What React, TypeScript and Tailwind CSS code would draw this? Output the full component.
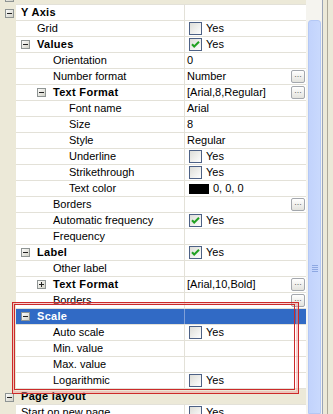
import React from 'react';
import clsx from 'clsx';

type Kind = 'cat' | 'group' | 'prop';

type Val =
  | { t: 'text'; s: string; btn?: boolean }
  | { t: 'check'; on: boolean }
  | { t: 'color'; s: string }
  | { t: 'btn' };

interface Row {
  label: string;
  level: number;
  kind: Kind;
  open?: boolean;
  value?: Val;
  selected?: boolean;
  shaded?: boolean;
}

const rows: Row[] = [
  { label: 'X Axis', level: 0, kind: 'cat', open: false, shaded: true },
  { label: 'Y Axis', level: 0, kind: 'cat', open: true },
  { label: 'Grid', level: 1, kind: 'prop', value: { t: 'check', on: false } },
  { label: 'Values', level: 1, kind: 'group', open: true, value: { t: 'check', on: true } },
  { label: 'Orientation', level: 2, kind: 'prop', value: { t: 'text', s: '0' } },
  { label: 'Number format', level: 2, kind: 'prop', value: { t: 'text', s: 'Number', btn: true } },
  { label: 'Text Format', level: 2, kind: 'group', open: true, value: { t: 'text', s: '[Arial,8,Regular]', btn: true } },
  { label: 'Font name', level: 3, kind: 'prop', value: { t: 'text', s: 'Arial' } },
  { label: 'Size', level: 3, kind: 'prop', value: { t: 'text', s: '8' } },
  { label: 'Style', level: 3, kind: 'prop', value: { t: 'text', s: 'Regular' } },
  { label: 'Underline', level: 3, kind: 'prop', value: { t: 'check', on: false } },
  { label: 'Strikethrough', level: 3, kind: 'prop', value: { t: 'check', on: false } },
  { label: 'Text color', level: 3, kind: 'prop', value: { t: 'color', s: '0, 0, 0' } },
  { label: 'Borders', level: 2, kind: 'prop', value: { t: 'btn' } },
  { label: 'Automatic frequency', level: 2, kind: 'prop', value: { t: 'check', on: true } },
  { label: 'Frequency', level: 2, kind: 'prop' },
  { label: 'Label', level: 1, kind: 'group', open: true, value: { t: 'check', on: true } },
  { label: 'Other label', level: 2, kind: 'prop' },
  { label: 'Text Format', level: 2, kind: 'group', open: false, value: { t: 'text', s: '[Arial,10,Bold]', btn: true } },
  { label: 'Borders', level: 2, kind: 'prop', value: { t: 'btn' } },
  { label: 'Scale', level: 1, kind: 'group', open: true, selected: true },
  { label: 'Auto scale', level: 2, kind: 'prop', value: { t: 'check', on: false } },
  { label: 'Min. value', level: 2, kind: 'prop' },
  { label: 'Max. value', level: 2, kind: 'prop' },
  { label: 'Logarithmic', level: 2, kind: 'prop', value: { t: 'check', on: false } },
  { label: 'Page layout', level: 0, kind: 'cat', open: true, shaded: true },
  { label: 'Start on new page', level: 0, kind: 'prop', value: { t: 'check', on: false } },
];

// text start, measured from the left edge of the name cell (x = 16)
const textPad = ['pl-[5px]', 'pl-[21px]', 'pl-[37px]', 'pl-[53px]'];

const Expander = ({ open }: { open?: boolean }) => (
  <svg width="9" height="9" viewBox="0 0 9 9" className="shrink-0">
    <defs>
      <linearGradient id="exp" x1="0" y1="0" x2="1" y2="1">
        <stop offset="0" stopColor="#ffffff" />
        <stop offset="1" stopColor="#cfcfc4" />
      </linearGradient>
    </defs>
    <rect x="0.5" y="0.5" width="8" height="8" fill="url(#exp)" stroke="#8e9493" />
    <path d="M2 4.5h5" stroke="#222" />
    {!open && <path d="M4.5 2v5" stroke="#222" />}
  </svg>
);

const CheckBox = ({ on }: { on: boolean }) => (
  <svg width="13" height="13" viewBox="0 0 13 13" className="shrink-0">
    <defs>
      <linearGradient id="cb" x1="0" y1="0" x2="1" y2="1">
        <stop offset="0" stopColor="#dcdcd6" />
        <stop offset="1" stopColor="#ffffff" />
      </linearGradient>
    </defs>
    <rect x="0.5" y="0.5" width="12" height="12" fill="url(#cb)" stroke="#4d6185" />
    {on && <path d="M3 6.2l2.2 2.3L10 3.8" fill="none" stroke="#21a121" strokeWidth="2" />}
  </svg>
);

const DotsButton = () => (
  <div className="ml-auto mr-[1px] flex h-[13px] w-[14px] shrink-0 items-start justify-center rounded-[2px] border border-[#a3a7ad] bg-gradient-to-b from-[#ffffff] to-[#e3e3dd] text-[9px] leading-[7px] text-[#6b6b6b]">
    ...
  </div>
);

const Value = ({ v, sel }: { v?: Val; sel?: boolean }) => {
  if (!v) return null;
  if (v.t === 'check')
    return (
      <div className="flex items-center gap-[4px] pl-[4px]">
        <CheckBox on={v.on} />
        <span className={sel ? 'text-white' : 'text-black'}>Yes</span>
      </div>
    );
  if (v.t === 'color')
    return (
      <div className="flex items-center gap-[4px] pl-[4px]">
        <div className="h-[10px] w-[20px] bg-black" />
        <span>{v.s}</span>
      </div>
    );
  if (v.t === 'btn') return <DotsButton />;
  return (
    <>
      <span className="pl-[2px]">{v.s}</span>
      {v.btn && <DotsButton />}
    </>
  );
};

const PropRow = ({ r }: { r: Row }) => {
  const bold = r.kind !== 'prop';
  const shaded = r.shaded;
  return (
    <div className="flex h-[16px]">
      <div className="flex w-[16px] shrink-0 items-center bg-[#ece9d8] pl-[5px]">
        {r.kind === 'cat' && <Expander open={r.open} />}
      </div>
      <div
        className={clsx(
          'flex flex-1 border-b border-[#e3e1d8]',
          r.selected && 'bg-[#316ac5] text-white',
          shaded && 'bg-[#ece9d8]'
        )}
      >
        <div
          className={clsx(
            'flex w-[169px] shrink-0 items-center whitespace-nowrap',
            !shaded && 'border-r',
            r.selected ? 'border-[#7f9fd8]' : 'border-[#e3e1d8]',
            r.kind === 'group' ? textPad[r.level - 1] : textPad[r.level]
          )}
        >
          {r.kind === 'group' && (
            <span className="mr-[7px] flex">
              <Expander open={r.open} />
            </span>
          )}
          <span className={clsx(bold && 'font-bold tracking-[0.3px]')}>{r.label}</span>
        </div>
        <div className="flex flex-1 items-center whitespace-nowrap">
          <Value v={r.value} sel={r.selected} />
        </div>
      </div>
    </div>
  );
};

export default function App() {
  return (
    <div className="relative flex h-[414px] w-[333px] overflow-hidden bg-white font-['Liberation_Sans',Arial,sans-serif] text-[11px] leading-[15px] text-black">
      <div className="w-[306px] shrink-0 overflow-hidden">
        <div className="-mt-[11px]">
          {rows.map((r, i) => (
            <PropRow key={i} r={r} />
          ))}
        </div>
      </div>

      {/* scrollbar */}
      <div className="flex w-[16px] shrink-0 flex-col bg-[#f5f4ef] pl-[2px] pr-[1px]">
        <div className="h-[20px] shrink-0" />
        <div className="flex flex-1 flex-col items-center rounded-t-[3px] border border-[#b4c8f5] bg-gradient-to-r from-[#c2d3fc] to-[#c9d9fd] pt-[244px]">
          <div className="flex w-[6px] flex-col gap-[1px]">
            <div className="h-[1px] bg-[#8ea8e2]" />
            <div className="h-[1px] bg-[#8ea8e2]" />
            <div className="h-[1px] bg-[#8ea8e2]" />
            <div className="h-[1px] bg-[#8ea8e2]" />
          </div>
        </div>
      </div>

      {/* window frame */}
      <div className="flex w-[11px] shrink-0">
        <div className="w-[1px] bg-[#9aa4b6]" />
        <div className="w-[4px] bg-[#ece9d8]" />
        <div className="w-[1px] bg-[#aca899]" />
        <div className="flex-1 bg-[#ece9d8]" />
      </div>

      {/* red annotation */}
      <div className="pointer-events-none absolute left-[12px] top-[302px] h-[92px] w-[287px] border border-[#cc2a2a] shadow-[inset_0_0_0_2px_rgba(240,150,150,0.45)]">
        <div className="absolute left-[1px] top-[1px] h-[86px] w-[281px] border border-[#cc2a2a]" />
      </div>
    </div>
  );
}
